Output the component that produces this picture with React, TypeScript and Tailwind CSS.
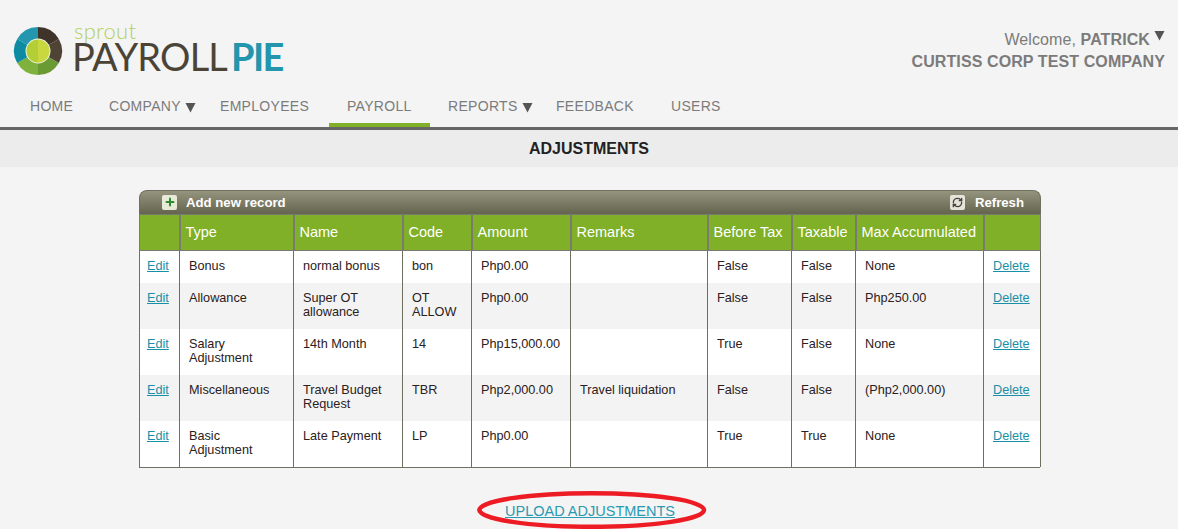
import { Plus, RefreshCw } from "lucide-react";

const navItems = [
  { label: "HOME", w: "w-[79px]" },
  { label: "COMPANY", w: "w-[111px]", arrow: true },
  { label: "EMPLOYEES", w: "w-[127px]" },
  { label: "PAYROLL", w: "w-[101px]", active: true },
  { label: "REPORTS", w: "w-[108px]", arrow: true },
  { label: "FEEDBACK", w: "w-[115px]" },
  { label: "USERS", w: "w-[86px]" },
];

const columns = ["", "Type", "Name", "Code", "Amount", "Remarks", "Before Tax", "Taxable", "Max Accumulated", ""];
const widths = ["w-[40px]", "w-[114px]", "w-[109px]", "w-[69px]", "w-[99px]", "w-[137px]", "w-[84px]", "w-[64px]", "w-[128px]", "w-[57px]"];

const rows = [
  { type: "Bonus", name: "normal bonus", code: "bon", amount: "Php0.00", remarks: "", before: "False", taxable: "False", max: "None", h: "h-[32px]" },
  { type: "Allowance", name: "Super OT allowance", code: "OT ALLOW", amount: "Php0.00", remarks: "", before: "False", taxable: "False", max: "Php250.00", h: "h-[46px]" },
  { type: "Salary Adjustment", name: "14th Month", code: "14", amount: "Php15,000.00", remarks: "", before: "True", taxable: "False", max: "None", h: "h-[46px]" },
  { type: "Miscellaneous", name: "Travel Budget Request", code: "TBR", amount: "Php2,000.00", remarks: "Travel liquidation", before: "False", taxable: "False", max: "(Php2,000.00)", h: "h-[46px]" },
  { type: "Basic Adjustment", name: "Late Payment", code: "LP", amount: "Php0.00", remarks: "", before: "True", taxable: "True", max: "None", h: "h-[46px]" },
];

const Arrow = () => (
  <svg width="11" height="11" viewBox="0 0 11 11" className="shrink-0">
    <polygon points="0.5,1 10.5,1 5.5,10.5" fill="#555555" />
  </svg>
);

const LogoMark = () => (
  <svg width="50" height="50" viewBox="0 0 50 50" className="mt-[2px] shrink-0">
    <path d="M25 25 L25 1 A24 24 0 0 1 45.8 13 Z" fill="#3f3429" />
    <path d="M25 25 L45.8 13 A24 24 0 0 1 45.8 37 Z" fill="#4e4335" />
    <path d="M25 25 L45.8 37 A24 24 0 0 1 25 49 Z" fill="#6a9a34" />
    <path d="M25 25 L25 49 A24 24 0 0 1 4.2 37 Z" fill="#7fb23c" />
    <path d="M25 25 L4.2 37 A24 24 0 0 1 4.2 13 Z" fill="#0d8ba3" />
    <path d="M25 25 L4.2 13 A24 24 0 0 1 25 1 Z" fill="#2496ad" />
    <circle cx="25" cy="25" r="12.5" fill="#eef3e0" />
    <path d="M25 13.5 A11.5 11.5 0 0 0 25 36.5 Z" fill="#b4cf35" />
    <path d="M25 13.5 A11.5 11.5 0 0 1 25 36.5 Z" fill="#c8d83e" />
  </svg>
);

const Cell = ({ children, px = "px-[9px]" }: { children?: React.ReactNode; px?: string }) => (
  <td className={`border-x border-[#6f6f5f] pt-[8px] align-top leading-[14px] ${px}`}>{children}</td>
);

export default function App() {
  return (
    <div className="relative h-[529px] overflow-hidden bg-[#f4f4f4] font-['Liberation_Sans',Arial,sans-serif]">
      <header className="flex h-[90px] justify-between pl-[13px] pr-[13px]">
        <div className="flex items-start pt-[24px]">
          <LogoMark />
          <div className="ml-[9px] flex flex-col font-['Lato',sans-serif]">
            <span className="ml-[2px] h-[17px] text-[22px] font-light leading-[14px] tracking-[0.3px] text-[#b5cf5c]">sprout</span>
            <span className="h-[32px] whitespace-nowrap text-[38px] leading-[30px] tracking-[-0.8px] text-[#4b4436]">
              PAYROLL<span className="ml-[4px] font-bold tracking-[-1.7px] text-[#2396ad]">PIE</span>
            </span>
          </div>
        </div>
        <div className="pt-[30px] text-right text-[16px] leading-[20px] tracking-[0.1px] text-[#7b7b7b]">
          <div className="flex items-start justify-end gap-[4px]">
            <span>Welcome, <b>PATRICK</b></span>
            <Arrow />
          </div>
          <div className="mt-[2px] font-bold">CURTISS CORP TEST COMPANY</div>
        </div>
      </header>

      <nav className="flex h-[40px] border-b-[3px] border-[#666666] pl-[12px]">
        {navItems.map((item) => (
          <a
            key={item.label}
            className={`flex h-[37px] items-start gap-[4px] px-[18px] pt-[6px] text-[14px] leading-[20px] tracking-[0.3px] text-[#7b7b7b] ${item.w} ${item.active ? "border-b-[4px] border-[#7fb027]" : ""}`}
          >
            {item.label}
            {item.arrow && <span className="pt-[6px]"><Arrow /></span>}
          </a>
        ))}
      </nav>

      <h1 className="h-[37px] bg-[#ececec] text-center text-[16px] font-bold leading-[38px] text-[#222222]">ADJUSTMENTS</h1>

      <main className="mx-[139px] mt-[23px] w-[902px]">
        <div className="flex h-[24px] items-center justify-between rounded-t-[8px] border border-b-0 border-[#6f6f5f] bg-gradient-to-b from-[#95947f] to-[#65644f] pl-[22px] pr-[16px] pt-[1px] text-[13.2px] font-bold text-white">
          <div className="flex items-center gap-[9px]">
            <span className="-mt-[1px] flex size-[15px] items-center justify-center rounded-[2px] bg-[#e8ead8]">
              <Plus size={12} strokeWidth={4} className="text-[#2f8a2f]" />
            </span>
            Add new record
          </div>
          <div className="flex items-center gap-[10px]">
            <span className="-mt-[1px] flex size-[15px] items-center justify-center rounded-[2px] bg-[#e4e4d8]">
              <RefreshCw size={11} strokeWidth={3} className="text-[#44443c]" />
            </span>
            Refresh
          </div>
        </div>
        <table className="w-[901px] table-fixed border-collapse text-[12.7px] text-[#2b2020]">
          <colgroup>
            {widths.map((w, i) => (
              <col key={i} className={w} />
            ))}
          </colgroup>
          <thead>
            <tr className="h-[36px] bg-[#7fb027] text-left text-[14.5px] font-normal text-white">
              {columns.map((c, i) => (
                <th key={i} className="whitespace-nowrap border-x-2 border-y border-[#7a7a72] px-[5px] font-normal first:border-l last:border-r">{c}</th>
              ))}
            </tr>
          </thead>
          <tbody>
            {rows.map((r, i) => (
              <tr key={r.type} className={`${r.h} ${i % 2 ? "bg-[#f3f3f3]" : "bg-white"}`}>
                <Cell px="px-[7px]"><a className="text-[#1a8fa8] underline">Edit</a></Cell>
                <Cell>{r.type}</Cell>
                <Cell>{r.name}</Cell>
                <Cell>{r.code}</Cell>
                <Cell>{r.amount}</Cell>
                <Cell>{r.remarks}</Cell>
                <Cell>{r.before}</Cell>
                <Cell>{r.taxable}</Cell>
                <Cell>{r.max}</Cell>
                <Cell><a className="text-[#1a8fa8] underline">Delete</a></Cell>
              </tr>
            ))}
          </tbody>
        </table>
        <div className="w-[901px] border-t border-[#6f6f5f]" />
        <div className="mt-[34px] text-center text-[14.5px] leading-[18px]">
          <a className="text-[#2a9ab3] underline">UPLOAD ADJUSTMENTS</a>
        </div>
      </main>

      <svg width="234" height="44" viewBox="0 0 234 44" className="pointer-events-none absolute left-[475px] top-[489px]">
        <ellipse cx="116.7" cy="21" rx="112.3" ry="16.8" fill="none" stroke="#ed1c24" strokeWidth="4.5" />
      </svg>
    </div>
  );
}
